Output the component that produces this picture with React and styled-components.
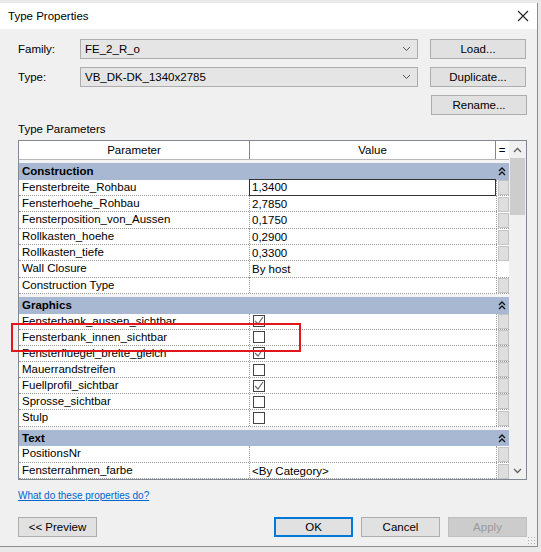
import React from "react";
import styled, { createGlobalStyle } from "styled-components";

const GlobalStyle = createGlobalStyle`
  html, body { margin: 0; padding: 0; background: #e9e9e9; }
  body {
    font-family: "Liberation Sans", Arial, sans-serif;
    font-size: 11.5px;
    color: #000;
  }
`;

const Screen = styled.div`
  position: relative;
  width: 541px;
  height: 552px;
  overflow: hidden;
  padding-top: 3px;
  box-sizing: border-box;
  background: #e9e9e9;
`;

const Dialog = styled.div`
  width: 538px;
  height: 544px;
  background: #f0f0f0;
  border-right: 1px solid #8c8c8c;
  border-bottom: 1px solid #8c8c8c;
  box-sizing: border-box;
  display: flex;
  flex-direction: column;
  position: relative;
`;

const TitleBar = styled.div`
  height: 26px;
  background: #fff;
  display: flex;
  align-items: center;
  justify-content: space-between;
  padding: 0 8px 0 8px;
`;

const Title = styled.span`
  font-size: 11.5px;
`;

const Body = styled.div`
  padding: 10px 10px 0 18px;
  display: flex;
  flex-direction: column;
`;

const FieldRow = styled.div`
  display: flex;
  align-items: center;
  height: 20px;
  margin-bottom: 8px;
`;

const Label = styled.span`
  width: 62px;
`;

const Combo = styled.div`
  width: 338px;
  height: 20px;
  box-sizing: border-box;
  border: 1px solid #adadad;
  background: #e5e5e5;
  display: flex;
  align-items: center;
  justify-content: space-between;
  padding: 0 6px 0 4px;
`;

const Button = styled.div`
  width: ${(p) => p.$w || 96}px;
  height: 20px;
  box-sizing: border-box;
  margin-left: ${(p) => (p.$push ? "auto" : "0")};
  border: 1px solid ${(p) => (p.$primary ? "#0078d7" : p.$disabled ? "#bfbfbf" : "#adadad")};
  box-shadow: ${(p) => (p.$primary ? "inset 0 0 0 1px #0078d7" : "none")};
  background: ${(p) => (p.$disabled ? "#cccccc" : "#e1e1e1")};
  color: ${(p) => (p.$disabled ? "#9a9a9a" : "#000")};
  display: flex;
  align-items: center;
  justify-content: center;
`;

const SideButton = styled(Button)`
  margin-left: ${(p) => (p.$push ? "auto" : "12px")};
`;

const SectionLabel = styled.div`
  margin-top: -1px;
  height: 14px;
  line-height: 14px;
`;

const Grid = styled.div`
  display: flex;
  width: 509px;
  height: 340px;
  margin-top: 4px;
  border: 1px solid #828790;
  box-sizing: border-box;
  background: #fff;
`;

const Table = styled.div`
  width: 490px;
  display: flex;
  flex-direction: column;
  overflow: hidden;
`;

const HeaderRow = styled.div`
  display: grid;
  grid-template-columns: 231px 246px 13px;
  height: 19px;
  border-bottom: 1px solid #b8b8b8;
  box-sizing: border-box;
`;

const HeaderCell = styled.div`
  display: flex;
  align-items: center;
  justify-content: center;
  border-right: 1px solid ${(p) => (p.$last ? "transparent" : "#828790")};
`;

const GroupRow = styled.div`
  height: 20px;
  box-sizing: border-box;
  border-top: 3px solid #f4f4f4;
  background: #a8b8d2;
  display: flex;
  align-items: center;
  justify-content: space-between;
  padding: 0 3px 0 3px;
  font-weight: bold;
`;

const Row = styled.div`
  display: grid;
  grid-template-columns: 231px 246px 13px;
  height: 16.33px;
  box-sizing: border-box;
  border-bottom: 1px dotted #9a9a9a;
`;

const ParamCell = styled.div`
  padding-left: 3px;
  border-right: 1px dotted #9a9a9a;
  line-height: 15px;
  white-space: nowrap;
  overflow: hidden;
`;

const ValueCell = styled.div`
  padding-left: 2px;
  line-height: 15px;
  box-sizing: border-box;
  border: 1px solid ${(p) => (p.$active ? "#333" : "transparent")};
  border-left: none;
  margin-left: ${(p) => (p.$active ? "-1px" : "0")};
  ${(p) => (p.$active ? "border-left: 1px solid #333; margin-top: -1px; height: 17px;" : "")}
  display: flex;
  align-items: center;
`;

const AssocCell = styled.div`
  display: flex;
  align-items: center;
  justify-content: center;
  border-left: 1px dotted #9a9a9a;
`;

const AssocBtn = styled.div`
  width: 9px;
  height: 13px;
  background: #dedede;
  border: 1px solid #c4c4c4;
`;

const Check = styled.div`
  width: 12px;
  height: 12px;
  box-sizing: border-box;
  border: 1px solid #444;
  background: #fff;
  display: flex;
  align-items: center;
  justify-content: center;
  margin-left: 1px;
`;

const ScrollBar = styled.div`
  width: 17px;
  background: #f0f0f0;
  display: flex;
  flex-direction: column;
  align-items: center;
`;

const ArrowBox = styled.div`
  width: 17px;
  height: 17px;
  display: flex;
  align-items: center;
  justify-content: center;
`;

const Thumb = styled.div`
  width: 15px;
  height: 57px;
  background: #cdcdcd;
`;

const Track = styled.div`
  flex: 1;
`;

const HelpLink = styled.a`
  margin-top: 9px;
  color: #0066cc;
  text-decoration: underline;
  font-size: 10px;
  line-height: 14px;
  align-self: flex-start;
`;

const Footer = styled.div`
  display: flex;
  gap: 8px;
  margin-top: 14px;
`;

const Spacer = styled.div`
  flex: 1;
`;

const Grip = styled.div`
  position: absolute;
  right: 2px;
  bottom: 2px;
  width: 8px;
  height: 8px;
  background-image: radial-gradient(#b0b0b0 0.8px, transparent 1px);
  background-size: 3px 3px;
`;

const Highlight = styled.div`
  position: absolute;
  left: 11px;
  top: 323px;
  width: 290px;
  height: 29px;
  box-sizing: border-box;
  border: 2.5px solid #e3161b;
`;

const Chevron = ({ up }) => (
  <svg width="9" height="6" viewBox="0 0 9 6">
    <path d={up ? "M1 5 L4.5 1.5 L8 5" : "M1 1 L4.5 4.5 L8 1"} fill="none" stroke="#606060" strokeWidth="1.3" />
  </svg>
);

const DoubleUp = () => (
  <svg width="8" height="9" viewBox="0 0 8 9">
    <path d="M1 4 L4 1 L7 4 M1 8 L4 5 L7 8" fill="none" stroke="#111" strokeWidth="1.3" />
  </svg>
);

const ComboArrow = () => (
  <svg width="9" height="6" viewBox="0 0 9 6">
    <path d="M1 1 L4.5 4.5 L8 1" fill="none" stroke="#555" strokeWidth="1" />
  </svg>
);

const CloseX = () => (
  <svg width="12" height="12" viewBox="0 0 12 12">
    <path d="M1 1 L11 11 M11 1 L1 11" stroke="#222" strokeWidth="1.1" />
  </svg>
);

const Tick = () => (
  <svg width="10" height="10" viewBox="0 0 10 10">
    <path d="M1 5 L4 8 L9 1" fill="none" stroke="#6a6a6a" strokeWidth="1.2" />
  </svg>
);

const groups = [
  {
    name: "Construction",
    rows: [
      { p: "Fensterbreite_Rohbau", v: "1,3400", active: true },
      { p: "Fensterhoehe_Rohbau", v: "2,7850" },
      { p: "Fensterposition_von_Aussen", v: "0,1750" },
      { p: "Rollkasten_hoehe", v: "0,2900" },
      { p: "Rollkasten_tiefe", v: "0,3300" },
      { p: "Wall Closure", v: "By host", noAssoc: true },
      { p: "Construction Type", v: "" },
    ],
  },
  {
    name: "Graphics",
    rows: [
      { p: "Fensterbank_aussen_sichtbar", check: true },
      { p: "Fensterbank_innen_sichtbar", check: false },
      { p: "Fensterfluegel_breite_gleich", check: true },
      { p: "Mauerrandstreifen", check: false },
      { p: "Fuellprofil_sichtbar", check: true },
      { p: "Sprosse_sichtbar", check: false },
      { p: "Stulp", check: false },
    ],
  },
  {
    name: "Text",
    rows: [
      { p: "PositionsNr", v: "" },
      { p: "Fensterrahmen_farbe", v: "<By Category>" },
    ],
  },
];

export default function App() {
  return (
    <Screen>
      <GlobalStyle />
      <Dialog>
        <TitleBar>
          <Title>Type Properties</Title>
          <CloseX />
        </TitleBar>
        <Body>
          <FieldRow>
            <Label>Family:</Label>
            <Combo>
              <span>FE_2_R_o</span>
              <ComboArrow />
            </Combo>
            <SideButton>Load...</SideButton>
          </FieldRow>
          <FieldRow>
            <Label>Type:</Label>
            <Combo>
              <span>VB_DK-DK_1340x2785</span>
              <ComboArrow />
            </Combo>
            <SideButton>Duplicate...</SideButton>
          </FieldRow>
          <FieldRow>
            <SideButton $push>Rename...</SideButton>
          </FieldRow>
          <SectionLabel>Type Parameters</SectionLabel>
          <Grid>
            <Table>
              <HeaderRow>
                <HeaderCell>Parameter</HeaderCell>
                <HeaderCell>Value</HeaderCell>
                <HeaderCell $last>=</HeaderCell>
              </HeaderRow>
              {groups.map((g) => (
                <React.Fragment key={g.name}>
                  <GroupRow>
                    <span>{g.name}</span>
                    <DoubleUp />
                  </GroupRow>
                  {g.rows.map((r) => (
                    <Row key={r.p}>
                      <ParamCell>{r.p}</ParamCell>
                      <ValueCell $active={r.active}>
                        {r.check === undefined ? r.v : <Check>{r.check && <Tick />}</Check>}
                      </ValueCell>
                      <AssocCell>{!r.noAssoc && <AssocBtn />}</AssocCell>
                    </Row>
                  ))}
                </React.Fragment>
              ))}
            </Table>
            <ScrollBar>
              <ArrowBox>
                <Chevron up />
              </ArrowBox>
              <Thumb />
              <Track />
              <ArrowBox>
                <Chevron />
              </ArrowBox>
            </ScrollBar>
          </Grid>
          <HelpLink>What do these properties do?</HelpLink>
          <Footer>
            <Button $w={79}>&lt;&lt; Preview</Button>
            <Spacer />
            <Button $w={79} $primary>OK</Button>
            <Button $w={79}>Cancel</Button>
            <Button $w={79} $disabled>Apply</Button>
          </Footer>
        </Body>
        <Grip />
      </Dialog>
      <Highlight />
    </Screen>
  );
}
